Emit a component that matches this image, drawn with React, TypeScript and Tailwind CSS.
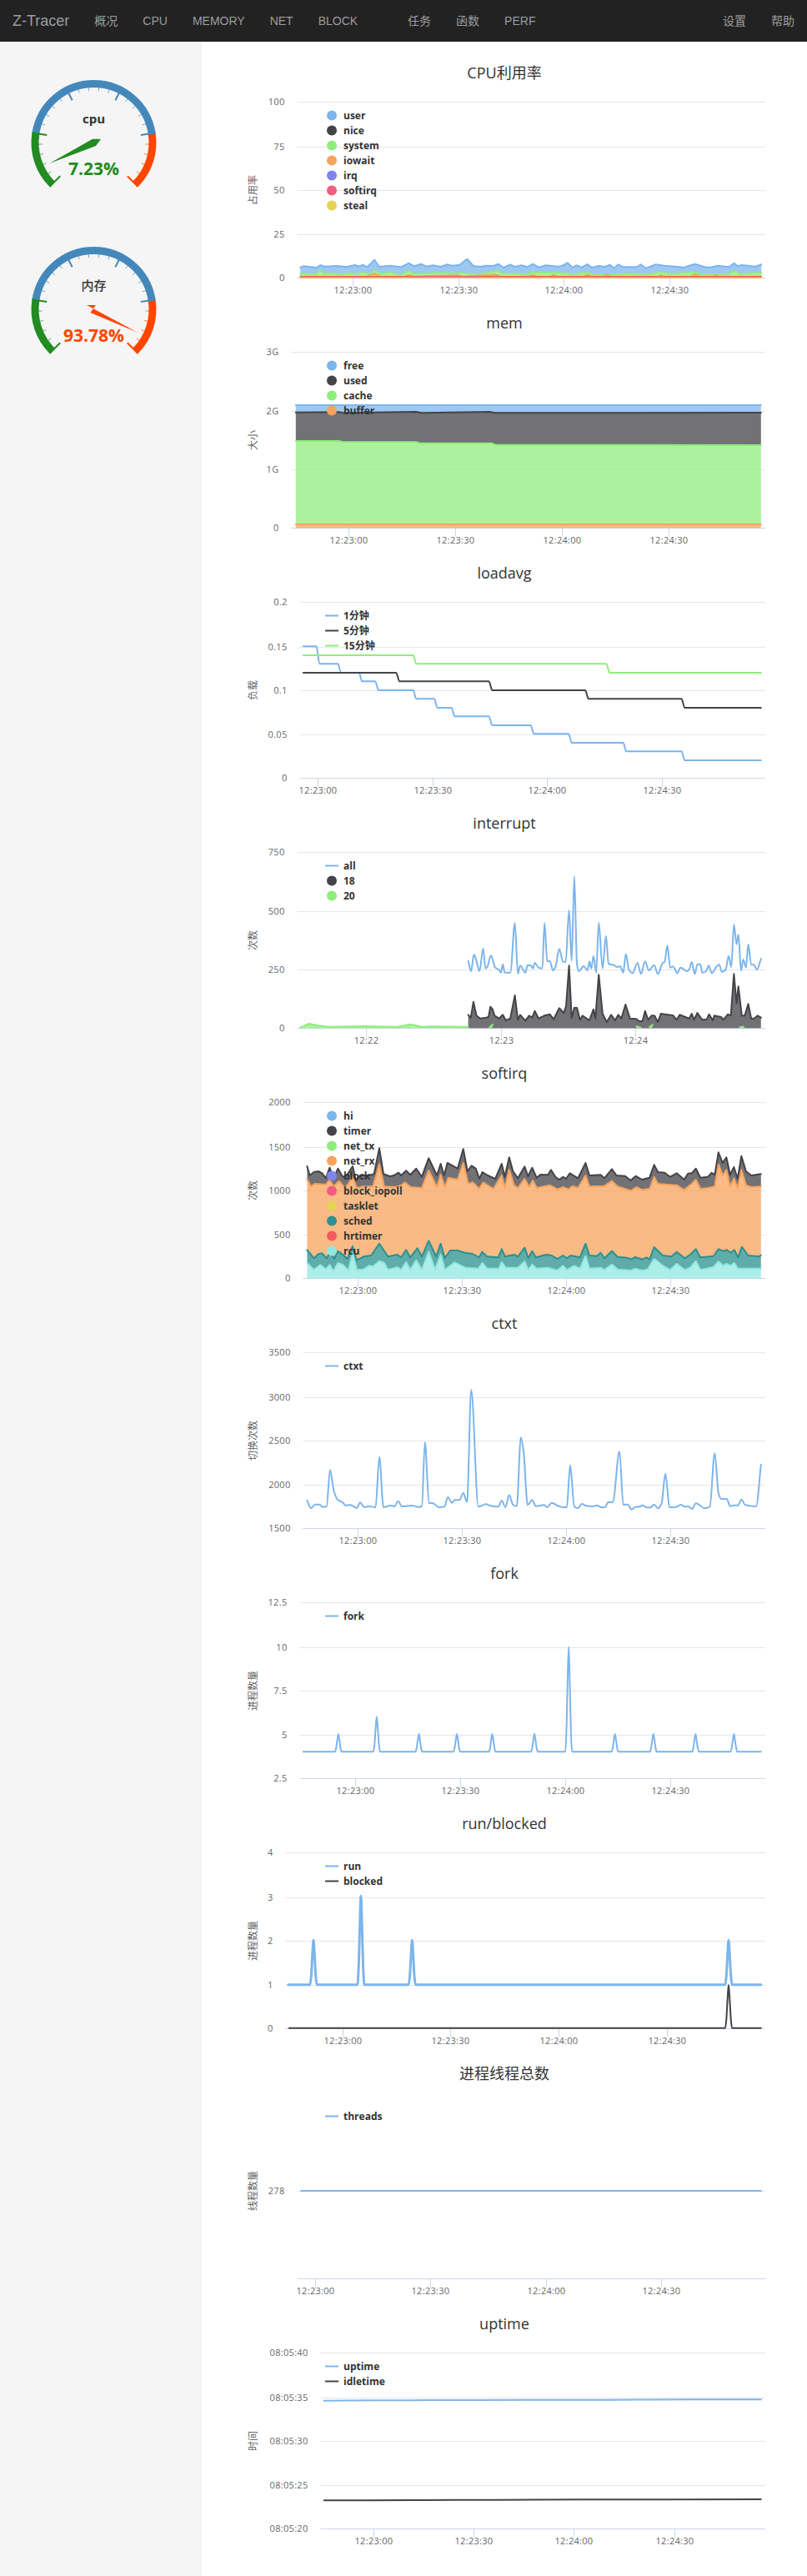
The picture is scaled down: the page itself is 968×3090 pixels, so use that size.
type Pts = number[][];

type Layer = { pts: Pts; floor?: Pts; color: string; width?: number };

type LegendItem = { name: string; color: string; kind: 'line' | 'dot' };

type ChartProps = {
  title: string;
  yTitle: string;
  left: number;
  yTicks: [string, number][];
  xTicks: [string, number][];
  layers: Layer[];
  legend: LegendItem[];
  dy?: number;
};

const BLUE = '#7cb5ec';
const DARK = '#434348';
const GREEN = '#90ed7d';
const ORANGE = '#f7a35c';
const PURPLE = '#8085e9';
const PINK = '#f15c80';
const YELLOW = '#e4d354';
const TEAL = '#2b908f';
const RED = '#f45b5b';
const AQUA = '#91e8e1';

const FIVE = [52.5, 106.5, 158.5, 211.5, 263.5];
const FOUR = [52.5, 123.5, 193.5, 263.5];

const ticks = (labels: string[], ys: number[]) => labels.map((l, i) => [l, ys[i]] as [string, number]);
const times = (xs: number[]) => ['12:23:00', '12:23:30', '12:24:00', '12:24:30'].map((l, i) => [l, xs[i]] as [string, number]);
const flat = (x0: number, x1: number, y: number): Pts => [[x0, y], [x1, y]];

// data below is traced from the reference, in crop pixels: x is 2.215 per px, y is 3 per px
const spikes = (x0: number, x1: number, base: number, peaks: Pts): Pts => {
  const out: Pts = [[x0, base]];
  for (const [x, y] of peaks) {
    const h = base - y;
    out.push([x - 9, base], [x - 6, base - h * 0.2], [x - 3, base - h * 0.65], [x, y], [x + 3, base - h * 0.65], [x + 6, base - h * 0.2], [x + 9, base]);
  }
  out.push([x1, base]);
  return out;
};

// monotone cubic through the points, so spline peaks stay round without overshoot
const spline = (pts: Pts) => {
  const n = pts.length;
  const d = pts.slice(1).map((p, i) => (p[1] - pts[i][1]) / (p[0] - pts[i][0]));
  const m = pts.map((_, i) => {
    if (i === 0) return d[0];
    if (i === n - 1) return d[n - 2];
    const a = d[i - 1];
    const b = d[i];
    return a * b <= 0 ? 0 : (2 * a * b) / (a + b);
  });
  let path = `M${pts[0][0].toFixed(1)} ${pts[0][1].toFixed(1)}`;
  for (let i = 0; i < n - 1; i++) {
    const [x1, y1] = pts[i];
    const [x2, y2] = pts[i + 1];
    const h = (x2 - x1) / 3;
    path += `C${(x1 + h).toFixed(1)} ${(y1 + m[i] * h).toFixed(1)} ${(x2 - h).toFixed(1)} ${(y2 - m[i + 1] * h).toFixed(1)} ${x2.toFixed(1)} ${y2.toFixed(1)}`;
  }
  return path;
};

const legendOf = (kind: 'line' | 'dot', names: string[]): LegendItem[] => {
  const colors = [BLUE, DARK, GREEN, ORANGE, PURPLE, PINK, YELLOW, TEAL, RED, AQUA];
  return names.map((name, i) => ({ name, kind, color: colors[i] }));
};

const cpuUser: Pts = [[222,783],[232,778],[265,783],[275,774],[285,779],[320,777],[345,781],[358,776],[368,774],[378,779],[388,773],[400,781],[419,755],[432,780],[460,776],[490,781],[510,767],[525,778],[543,770],[557,779],[575,775],[595,780],[612,772],[625,776],[645,773],[665,752],[682,777],[700,780],[715,776],[735,777],[748,770],[762,783],[780,772],[792,780],[810,775],[825,781],[840,770],[855,782],[875,775],[905,779],[915,778],[932,766],[945,783],[955,775],[970,782],[985,771],[997,783],[1015,777],[1030,780],[1045,773],[1055,785],[1067,772],[1080,781],[1115,781],[1127,772],[1140,785],[1167,772],[1190,776],[1225,780],[1240,783],[1270,770],[1295,780],[1310,783],[1330,776],[1362,781],[1374,767],[1385,778],[1395,774],[1430,779],[1447,772]];
const cpuSystem: Pts = [[222,806],[232,805],[262,807],[275,793],[285,806],[300,803],[335,808],[350,803],[375,805],[388,800],[405,808],[419,792],[435,805],[450,803],[460,798],[475,806],[490,808],[510,795],[525,805],[600,802],[640,804],[650,800],[665,804],[700,806],[745,794],[760,805],[800,805],[825,808],[840,800],[930,803],[945,808],[985,800],[997,807],[1050,808],[1100,805],[1140,808],[1180,800],[1210,806],[1260,800],[1275,800],[1285,808],[1360,806],[1375,795],[1390,806],[1447,801]];
const cpuIowait: Pts = [[222,815],[400,815],[420,804],[435,815],[500,815],[510,809],[525,815],[640,810],[655,815],[740,808],[755,815],[830,815],[840,809],[850,815],[885,815],[895,810],[905,815],[975,815],[985,808],[995,815],[1030,815],[1035,807],[1045,815],[1175,815],[1180,810],[1190,815],[1260,815],[1270,806],[1282,815],[1320,815],[1325,810],[1335,815],[1447,815]];

const memUsed: Pts = [[210,404],[325,403],[335,406],[530,402],[542,406],[725,402],[738,406],[1446,405]];
const memCache: Pts = [[210,507],[325,507],[335,511],[530,511],[540,515],[730,515],[740,521],[1446,522]];

const load1: Pts = [[230,316],[265,316],[273,379],[322,379],[330,411],[378,411],[386,442],[421,442],[430,474],[522,474],[530,505],[578,505],[586,537],[624,537],[632,568],[723,568],[732,600],[834,600],[843,631],[935,631],[943,663],[1080,663],[1088,694],[1235,694],[1243,726],[1446,726]];
const load5: Pts = [[230,411],[477,411],[485,442],[723,442],[732,474],[979,474],[988,505],[1235,505],[1243,537],[1446,537]];
const load15: Pts = [[230,348],[522,348],[530,379],[1035,379],[1044,411],[1446,411]];

const irqAll: Pts = [[668,548],[676,585],[683,525],[690,548],[698,585],[708,503],[714,575],[720,565],[728,528],[740,572],[750,580],[755,590],[760,560],[765,590],[780,590],[792,412],[800,595],[806,565],[820,590],[826,563],[835,565],[840,575],[845,555],[855,572],[865,575],[871,412],[878,550],[885,548],[893,582],[900,570],[910,505],[920,550],[927,552],[936,365],[943,548],[950,243],[957,560],[962,585],[975,567],[985,582],[990,550],[995,575],[1001,530],[1008,590],[1015,410],[1025,575],[1034,458],[1041,558],[1055,563],[1063,570],[1072,567],[1080,590],[1087,523],[1095,580],[1105,592],[1118,555],[1127,595],[1138,550],[1148,582],[1162,563],[1172,595],[1185,555],[1190,552],[1197,493],[1205,572],[1212,568],[1224,592],[1232,572],[1250,585],[1255,580],[1262,552],[1270,595],[1277,560],[1285,560],[1290,590],[1300,585],[1307,565],[1315,592],[1330,565],[1335,562],[1342,587],[1352,580],[1360,530],[1367,570],[1374,417],[1381,488],[1386,453],[1393,583],[1399,543],[1406,572],[1412,488],[1420,562],[1427,562],[1435,580],[1446,540]];
const irq18: Pts = [[668,742],[675,752],[682,695],[690,745],[700,755],[715,752],[722,750],[727,713],[733,722],[738,745],[750,755],[760,742],[768,762],[780,755],[792,672],[800,760],[806,742],[820,763],[830,745],[838,752],[845,728],[855,755],[870,745],[885,740],[895,758],[910,718],[922,735],[928,710],[936,565],[943,753],[950,716],[957,717],[965,760],[972,745],[990,762],[1001,722],[1006,755],[1015,598],[1025,738],[1036,768],[1048,742],[1058,762],[1067,742],[1075,755],[1086,705],[1098,755],[1115,757],[1122,765],[1131,765],[1138,728],[1146,760],[1155,745],[1163,745],[1172,768],[1180,738],[1212,744],[1222,760],[1230,742],[1245,750],[1255,755],[1262,738],[1268,760],[1277,735],[1290,760],[1302,758],[1308,740],[1318,762],[1322,745],[1340,750],[1346,760],[1358,740],[1366,745],[1374,595],[1381,700],[1386,640],[1395,745],[1403,745],[1412,703],[1420,755],[1428,755],[1437,745],[1446,752]];
const irq20: Pts = [[222,788],[245,774],[270,781],[300,785],[390,783],[480,785],[515,776],[545,785],[570,784],[668,785]];

const softTimer: Pts = [[240,387],[247,420],[258,408],[270,405],[280,412],[290,430],[300,392],[310,430],[322,395],[335,425],[345,420],[361,387],[370,440],[380,420],[405,420],[418,415],[432,322],[443,415],[460,423],[470,420],[483,410],[490,420],[503,403],[514,418],[530,395],[545,425],[563,358],[585,420],[595,378],[604,420],[613,375],[640,395],[655,325],[666,405],[677,385],[688,395],[698,432],[706,408],[720,420],[740,432],[757,378],[765,425],[777,355],[787,405],[800,430],[818,388],[827,423],[838,392],[850,428],[860,417],[880,418],[888,400],[900,425],[910,435],[920,425],[928,432],[938,412],[960,430],[980,375],[990,420],[1020,418],[1030,430],[1050,397],[1062,420],[1085,422],[1100,438],[1113,422],[1130,435],[1150,428],[1162,382],[1172,408],[1190,410],[1205,425],[1222,412],[1242,435],[1252,413],[1262,412],[1273,395],[1285,428],[1305,425],[1315,410],[1323,418],[1333,337],[1344,375],[1354,355],[1364,418],[1374,390],[1384,432],[1394,350],[1406,405],[1420,420],[1446,415]];
const softRx: Pts = [[240,433],[250,460],[260,450],[290,453],[300,435],[310,460],[325,440],[340,465],[350,450],[361,425],[372,465],[390,460],[415,460],[432,380],[445,460],[475,462],[490,455],[500,445],[515,462],[545,465],[563,402],[585,462],[595,417],[606,462],[615,428],[640,435],[655,375],[668,450],[680,445],[697,468],[708,445],[735,468],[757,420],[765,465],[777,400],[790,455],[800,465],[818,432],[830,462],[840,438],[850,465],[885,455],[905,470],[920,462],[935,470],[945,458],[960,465],[980,420],[990,460],[1030,458],[1050,440],[1065,460],[1100,475],[1115,462],[1130,472],[1150,468],[1162,425],[1172,450],[1190,452],[1222,455],[1242,472],[1262,450],[1273,435],[1285,468],[1305,465],[1323,460],[1333,380],[1344,420],[1354,400],[1364,460],[1374,430],[1384,465],[1394,400],[1406,455],[1420,462],[1446,460]];
const softSched: Pts = [[240,688],[258,718],[270,703],[280,700],[292,718],[302,695],[312,720],[322,692],[335,705],[347,720],[361,675],[372,725],[390,712],[410,708],[432,665],[455,712],[480,705],[490,715],[503,688],[514,715],[533,682],[545,712],[563,655],[583,712],[595,665],[606,718],[620,690],[640,690],[660,698],[680,702],[697,715],[705,695],[718,712],[748,715],[757,685],[766,712],[790,705],[800,712],[818,680],[828,718],[838,692],[848,715],[875,705],[890,708],[905,720],[920,708],[930,718],[940,708],[965,715],[980,665],[990,708],[1010,710],[1020,698],[1030,718],[1050,692],[1065,713],[1090,716],[1100,722],[1112,714],[1130,722],[1142,715],[1150,722],[1162,678],[1185,708],[1208,712],[1222,695],[1243,718],[1258,705],[1273,685],[1285,715],[1310,712],[1320,710],[1333,685],[1345,692],[1355,688],[1365,698],[1375,688],[1385,715],[1395,677],[1412,708],[1440,712],[1446,707]];
const softRcu: Pts = [[240,735],[258,760],[275,742],[290,758],[300,742],[310,765],[322,735],[335,742],[350,762],[361,700],[372,760],[390,758],[405,745],[415,748],[432,728],[445,735],[455,760],[480,750],[490,760],[503,732],[514,760],[530,725],[545,760],[563,695],[580,758],[595,705],[606,760],[632,733],[660,752],[695,755],[706,735],[718,755],[750,755],[757,732],[768,752],[800,752],[818,730],[828,760],[838,740],[850,755],[880,752],[905,762],[920,745],[930,760],[950,745],[965,755],[980,710],[990,755],[1020,752],[1030,760],[1050,740],[1065,758],[1100,762],[1112,756],[1130,762],[1145,758],[1162,720],[1185,745],[1205,760],[1222,738],[1243,760],[1258,752],[1273,728],[1285,760],[1320,750],[1333,730],[1345,745],[1355,738],[1365,745],[1375,735],[1385,755],[1446,755]];

const ctxt: Pts = [[240,690],[250,717],[262,704],[272,704],[282,713],[292,710],[301,580],[312,660],[322,688],[335,697],[342,707],[355,706],[372,717],[381,697],[392,714],[403,710],[422,714],[432,533],[443,714],[462,708],[472,711],[482,692],[492,711],[520,708],[535,713],[545,710],[553,480],[564,698],[575,700],[590,714],[605,712],[614,678],[625,698],[632,688],[645,688],[655,662],[665,695],[676,292],[695,712],[715,703],[725,708],[748,712],[757,690],[767,714],[777,670],[787,705],[797,710],[808,463],[815,510],[826,706],[838,688],[848,710],[870,706],[878,714],[890,698],[905,708],[920,714],[930,714],[939,563],[950,712],[960,717],[970,702],[982,709],[1000,711],[1010,707],[1022,714],[1032,713],[1040,696],[1052,696],[1070,513],[1080,705],[1092,704],[1102,722],[1112,713],[1122,712],[1132,707],[1142,715],[1152,715],[1162,704],[1172,718],[1182,700],[1192,593],[1203,714],[1220,713],[1233,705],[1243,712],[1253,711],[1263,720],[1273,700],[1283,706],[1295,718],[1310,712],[1323,520],[1333,662],[1340,684],[1355,684],[1364,710],[1373,707],[1385,707],[1394,686],[1404,706],[1433,711],[1446,560]];

const charts: ChartProps[] = [
  {
    title: 'CPU利用率', yTitle: '占用率', left: 94.5, dy: -10,
    yTicks: ticks(['100', '75', '50', '25', '0'], FIVE),
    xTicks: times([161.5, 288.5, 414.5, 541.5]),
    legend: legendOf('dot', ['user', 'nice', 'system', 'iowait', 'irq', 'softirq', 'steal']),
    layers: [
      { pts: cpuUser, floor: cpuSystem, color: BLUE },
      { pts: cpuSystem, floor: cpuIowait, color: GREEN },
      { pts: cpuIowait, floor: flat(222, 1447, 818), color: ORANGE },
      { pts: flat(222, 1447, 815), color: RED, width: 1.5 },
      { pts: flat(222, 1447, 819), color: ORANGE, width: 1.5 },
    ],
  },
  {
    title: 'mem', yTitle: '大小', left: 87.5, dy: -10,
    yTicks: ticks(['3G', '2G', '1G', '0'], FOUR),
    xTicks: times([156.5, 284.5, 412.5, 540.5]),
    legend: legendOf('dot', ['free', 'used', 'cache', 'buffer']),
    layers: [
      { pts: flat(210, 1446, 378), floor: memUsed, color: BLUE },
      { pts: memUsed, floor: memCache, color: DARK },
      { pts: memCache, floor: flat(210, 1446, 807), color: GREEN },
      { pts: flat(210, 1446, 807), floor: flat(210, 1446, 820), color: ORANGE },
    ],
  },
  {
    title: 'loadavg', yTitle: '负载', left: 97.5,
    yTicks: ticks(['0.2', '0.15', '0.1', '0.05', '0'], FIVE),
    xTicks: times([119.5, 257.5, 394.5, 532.5]),
    legend: legendOf('line', ['1分钟', '5分钟', '15分钟']),
    layers: [
      { pts: load1, color: BLUE },
      { pts: load5, color: DARK },
      { pts: load15, color: GREEN },
    ],
  },
  {
    title: 'interrupt', yTitle: '次数', left: 94.5,
    yTicks: ticks(['750', '500', '250', '0'], FOUR),
    xTicks: [['12:22', 177.5], ['12:23', 339.5], ['12:24', 500.5]],
    legend: [
      { name: 'all', color: BLUE, kind: 'line' },
      { name: '18', color: DARK, kind: 'dot' },
      { name: '20', color: GREEN, kind: 'dot' },
    ],
    layers: [
      { pts: irqAll, color: BLUE },
      { pts: irq18, floor: flat(668, 1446, 790), color: DARK },
      { pts: irq20, floor: flat(222, 668, 790), color: GREEN },
      { pts: [[724,788],[733,777]], floor: flat(724, 733, 790), color: GREEN },
      { pts: [[1115,784],[1126,788]], floor: flat(1115, 1126, 790), color: GREEN },
      { pts: [[1150,786],[1158,778]], floor: flat(1150, 1158, 790), color: GREEN },
      { pts: [[1390,787],[1400,785]], floor: flat(1390, 1400, 790), color: GREEN },
    ],
  },
  {
    title: 'softirq', yTitle: '次数', left: 101.5,
    yTicks: ticks(['2000', '1500', '1000', '500', '0'], FIVE),
    xTicks: times([167.5, 292.5, 417.5, 542.5]),
    legend: legendOf('dot', ['hi', 'timer', 'net_tx', 'net_rx', 'block', 'block_iopoll', 'tasklet', 'sched', 'hrtimer', 'rcu']),
    layers: [
      { pts: softTimer, floor: softRx, color: DARK },
      { pts: softRx, floor: softSched, color: ORANGE },
      { pts: softSched, floor: softRcu, color: TEAL },
      { pts: softRcu, floor: flat(240, 1446, 790), color: AQUA },
    ],
  },
  {
    title: 'ctxt', yTitle: '切换次数', left: 101.5,
    yTicks: ticks(['3500', '3000', '2500', '2000', '1500'], FIVE),
    xTicks: times([167.5, 292.5, 417.5, 542.5]),
    legend: legendOf('line', ['ctxt']),
    layers: [{ pts: ctxt, color: BLUE }],
  },
  {
    title: 'fork', yTitle: '进程数量', left: 97.5,
    yTicks: ticks(['12.5', '10', '7.5', '5', '2.5'], FIVE),
    xTicks: times([164.5, 290.5, 416.5, 542.5]),
    legend: legendOf('line', ['fork']),
    layers: [{ pts: spikes(230, 1446, 694, [[323,630],[425,568],[537,630],[638,630],[732,630],[844,630],[935,316],[1058,630],[1160,630],[1272,630],[1374,630]]), color: BLUE }],
  },
  {
    title: 'run/blocked', yTitle: '进程数量', left: 80.5,
    yTicks: ticks(['4', '3', '2', '1', '0'], FIVE),
    xTicks: times([149.5, 278.5, 408.5, 538.5]),
    legend: legendOf('line', ['run', 'blocked']),
    layers: [
      { pts: spikes(190, 1446, 632, [[257,472],[383,313],[519,472],[1360,472]]), color: BLUE, width: 3 },
      { pts: spikes(192, 1446, 788, [[1360,632]]), color: DARK },
    ],
  },
  {
    title: '进程线程总数', yTitle: '线程数量', left: 94.5,
    yTicks: [['278', 158.5]],
    xTicks: times([116.5, 254.5, 393.5, 531.5]),
    legend: legendOf('line', ['threads']),
    layers: [{ pts: flat(224, 1446, 474), color: BLUE }],
  },
  {
    title: 'uptime', yTitle: '时间', left: 122.5,
    yTicks: ticks(['08:05:40', '08:05:35', '08:05:30', '08:05:25', '08:05:20'], FIVE),
    xTicks: times([186.5, 306.5, 426.5, 547.5]),
    legend: legendOf('line', ['uptime', 'idletime']),
    layers: [
      { pts: [[285,329],[420,328],[630,327],[840,326],[1050,326],[1260,325],[1446,325]], color: BLUE },
      { pts: [[285,688],[515,687],[740,686],[970,685],[1190,685],[1446,684]], color: DARK },
    ],
  },
];

function Chart({ title, yTitle, left, yTicks, xTicks, layers, legend, dy = 0 }: ChartProps) {
  const map = (pts: Pts): Pts => pts.map(([x, y]) => [x / 2.215 - 2, y / 3 + dy]);
  const str = (pts: Pts) => map(pts).map(([x, y]) => `${x.toFixed(1)},${y.toFixed(1)}`).join(' ');

  return (
    <svg width="686" height="300" className="block">
      <text x="343" y="24" textAnchor="middle" className="fill-[#333333] text-[18px]">{title}</text>

      {/* grid */}
      {yTicks.map(([label, y]) => (
        <g key={label}>
          <line x1={left} x2="656" y1={y} y2={y} stroke="#e6e6e6" />
          <text x={left - 15} y={y + 3.5} textAnchor="end" className="fill-[#666666] text-[11px] tracking-[0.3px]">{label}</text>
        </g>
      ))}
      <line x1={left} x2="656" y1="263.5" y2="263.5" stroke="#ccd6eb" />
      {xTicks.map(([label, x]) => (
        <g key={label}>
          <line x1={x} x2={x} y1="263.5" y2="273.5" stroke="#ccd6eb" />
          <text x={x} y="282" textAnchor="middle" className="fill-[#666666] text-[11px] tracking-[0.3px]">{label}</text>
        </g>
      ))}
      <text x="46" y="158" textAnchor="middle" transform="rotate(-90 46 158)" className="fill-[#666666] text-[12px]">{yTitle}</text>

      {/* series: plain lines are splines, stacked bands keep straight edges */}
      {layers.map((l, i) => (
        <g key={i}>
          {l.floor && <polygon points={`${str(l.pts)} ${str([...l.floor].reverse())}`} fill={l.color} fillOpacity={0.75} />}
          {l.floor ? (
            <polyline points={str(l.pts)} fill="none" stroke={l.color} strokeWidth={l.width ?? 2} strokeLinejoin="round" strokeLinecap="round" />
          ) : (
            <path d={spline(map(l.pts))} fill="none" stroke={l.color} strokeWidth={l.width ?? 2} strokeLinejoin="round" strokeLinecap="round" />
          )}
        </g>
      ))}

      {/* legend */}
      {legend.map((item, i) => {
        const y = 68.5 + i * 18;
        return (
          <g key={item.name}>
            {item.kind === 'line' ? (
              <line x1="128" x2="144" y1={y} y2={y} stroke={item.color} strokeWidth="2" />
            ) : (
              <circle cx="136" cy={y} r="6" fill={item.color} />
            )}
            <text x="150" y={y + 4} className="fill-[#333333] text-[12px] font-bold">{item.name}</text>
          </g>
        );
      })}
    </svg>
  );
}

function Gauge({ name, value, pointer, nameClass }: { name: string; value: number; pointer: string; nameClass: string }) {
  const cx = 112.5;
  const cy = 100;
  const pt = (deg: number, r: number) => {
    const a = (deg * Math.PI) / 180;
    return [cx + r * Math.cos(a), cy - r * Math.sin(a)];
  };
  const arc = (from: number, to: number) => {
    const [x1, y1] = pt(from, 70.5);
    const [x2, y2] = pt(to, 70.5);
    return `M${x1} ${y1}A70.5 70.5 0 0 1 ${x2} ${y2}`;
  };
  const colorAt = (p: number) => (p <= 0.2 ? '#228b22' : p <= 0.8 ? '#4488bb' : '#ff4500');
  const main = value < 20 ? '#228b22' : '#ff4500';

  return (
    <svg width="225" height="200" className="block shrink-0">
      <path d={arc(225, 171)} fill="none" stroke="#228b22" strokeWidth="9" />
      <path d={arc(171, 9)} fill="none" stroke="#4488bb" strokeWidth="9" />
      <path d={arc(9, -45)} fill="none" stroke="#ff4500" strokeWidth="9" />
      {Array.from({ length: 26 }, (_, i) => {
        const p = i / 25;
        const deg = 225 - 270 * p;
        const major = i % 5 === 0;
        const [x1, y1] = pt(deg, major ? 75 : 67);
        const [x2, y2] = pt(deg, major ? 57 : 62);
        return (
          <line key={i} x1={x1} y1={y1} x2={x2} y2={y2} stroke={colorAt(i === 25 ? 1 : p)} strokeWidth={major ? 2 : 1} strokeOpacity={major ? 1 : 0.7} />
        );
      })}
      <polygon points={pointer} fill={main} />
      <text x={cx} y="77" textAnchor="middle" className={`fill-[#333333] text-[15px] ${nameClass}`}>{name}</text>
      <text x={cx} y="139" textAnchor="middle" fill={main} className="text-[21px] font-bold">{value}%</text>
    </svg>
  );
}

export default function App() {
  const link = 'px-[15px] leading-[50px] text-[#9d9d9d]';

  return (
    <div className="min-h-screen bg-white font-['Open_Sans','Noto_Sans_CJK_SC',sans-serif]">
      <nav className="flex h-[50px] items-center bg-[#222222] font-['Liberation_Sans','Noto_Sans_CJK_SC',sans-serif] text-[14px]">
        <a className="px-[15px] text-[18px] leading-[50px] text-[#9d9d9d]">Z-Tracer</a>
        <a className={link}>概况</a>
        <a className={link}>CPU</a>
        <a className={link}>MEMORY</a>
        <a className={link}>NET</a>
        <a className={link}>BLOCK</a>
        <a className={`${link} ml-[30px]`}>任务</a>
        <a className={link}>函数</a>
        <a className={link}>PERF</a>
        <div className="ml-auto flex">
          <a className={link}>设置</a>
          <a className={link}>帮助</a>
        </div>
      </nav>

      <div className="flex">
        <aside className="flex w-[242px] shrink-0 flex-col border-r border-[#eeeeee] bg-[#f5f5f5] pt-[21px]">
          <Gauge name="cpu" value={7.23} pointer="111,95.7 121,95.7 115,104 59.3,125" nameClass="font-bold" />
          <Gauge name="内存" value={93.78} pointer="104,95 115,95 108.3,104 165,127.7" nameClass="font-medium" />
        </aside>
        <main className="flex w-[726px] flex-col px-5 py-5">
          {charts.map((c) => (
            <Chart key={c.title} {...c} />
          ))}
        </main>
      </div>
    </div>
  );
}
